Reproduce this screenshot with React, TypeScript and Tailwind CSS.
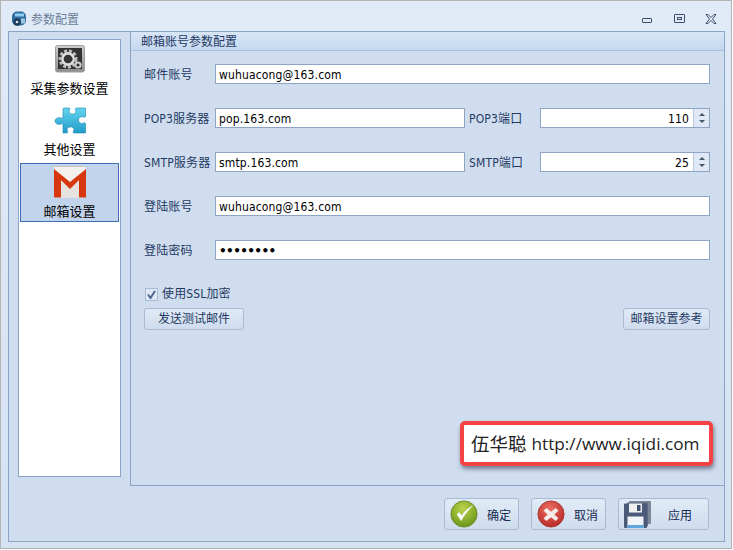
const FONT = "font-['DejaVu_Sans_Condensed','DejaVu_Sans','Noto_Sans_CJK_SC',sans-serif]";
const CJK = "font-['Noto_Sans_CJK_SC',sans-serif]";

function Gear() {
  return (
    <svg width="30" height="28" viewBox="0 0 30 28">
      <defs>
        <linearGradient id="gf" x1="0" y1="0" x2="0" y2="1"><stop offset="0" stopColor="#cfcfcf" /><stop offset="1" stopColor="#8d8d8d" /></linearGradient>
      </defs>
      <rect x="0.5" y="0.5" width="29" height="26.5" rx="2" fill="url(#gf)" stroke="#a0a0a0" />
      <rect x="3" y="3" width="24" height="21" fill="#333" />
      <circle cx="13" cy="14" r="8" fill="none" stroke="#bdbdbd" strokeWidth="3" strokeDasharray="3 1.800" />
      <circle cx="13" cy="14" r="5.600" fill="none" stroke="#dcdcdc" strokeWidth="2.600" />
      <circle cx="15" cy="14" r="2.500" fill="#333" />
      <circle cx="23" cy="20" r="2.600" fill="#333" stroke="#d0d0d0" strokeWidth="2" />
    </svg>
  );
}

function Puzzle() {
  return (
    <svg width="32" height="27" viewBox="0 0 32 27">
      <defs>
        <linearGradient id="pz" x1="0" y1="0" x2="0" y2="1"><stop offset="0" stopColor="#66d4f0" /><stop offset="1" stopColor="#1f9dcb" /></linearGradient>
      </defs>
      <path d="M10 1h5c1 0 1 1 .5 2-1 2 0 4 3 4s4-2 3-4c-.5-1 0-2 1-2h9v8c0 1-1 1.500-2 1-2-1-5 0-5 3s3 4 5 3c1-.5 2 0 2 1v9H20c-1 0-1-1-.5-2 1-2 0-4-3-4s-4 2-3 4c.5 1 0 2-1 2H9v-8c0-1-1-1.500-2-1-2 1-6 0-6-3s4-4 6-3c1 .5 2 0 2-1V2c0-.6.500-1 1-1z" fill="url(#pz)" stroke="#1b86ad" strokeWidth="0.6" />
    </svg>
  );
}

function Gmail() {
  return (
    <svg width="32" height="32" viewBox="0 0 32 32">
      <rect x="0" y="0" width="32" height="31.500" fill="#f3f1ee" />
      <rect x="0" y="0" width="32" height="1" fill="#c9c5bf" />
      <path d="M7 14 16 23 25 14V31.500H7z" fill="#e6e3de" />
      <path d="M0 3 16 16 32 3V31.500H25V14L16 23 7 14V31.500H0z" fill="#d7370f" />
    </svg>
  );
}

function Check() {
  return (
    <svg width="28" height="28" viewBox="0 0 30 30">
      <defs>
        <radialGradient id="ck" cx="0.45" cy="0.3" r="0.8"><stop offset="0" stopColor="#bcd34c" /><stop offset="1" stopColor="#5f8f14" /></radialGradient>
      </defs>
      <circle cx="15" cy="15" r="14" fill="url(#ck)" stroke="#6d8a22" />
      <path d="M7.500 15.500 12 22c4-7 7-11 12-15.500C18.500 9 15 13 12.500 17L10 13.500z" fill="#fff" stroke="#e9efe0" strokeWidth="0.8" />
    </svg>
  );
}

function Cross() {
  return (
    <svg width="28" height="28" viewBox="0 0 30 30">
      <defs>
        <radialGradient id="cr" cx="0.45" cy="0.3" r="0.8"><stop offset="0" stopColor="#ee6f66" /><stop offset="1" stopColor="#b0211c" /></radialGradient>
      </defs>
      <circle cx="15" cy="15" r="14" fill="url(#cr)" stroke="#a83a32" />
      <path d="M10 8.500l5 4 5-4 3 3-4.500 4 4.500 4-3 3-5-4-5 4-3-3 4.500-4L7 11.500z" fill="#f4ece8" />
    </svg>
  );
}

function Save() {
  return (
    <svg width="27" height="27" viewBox="0 0 27 27">
      <rect x="5" y="0" width="22" height="23" rx="1" fill="#7b8799" />
      <rect x="3" y="1.500" width="21" height="24" rx="1" fill="#5c6a82" />
      <path d="M0 3.500a1 1 0 0 1 1-1h20l2 2V26a1 1 0 0 1-1 1H1a1 1 0 0 1-1-1z" fill="#4b5a78" />
      <rect x="5" y="2.500" width="13" height="9" fill="#eef0f3" />
      <rect x="13" y="4" width="3.500" height="6" fill="#3e4f6d" />
      <rect x="3.500" y="15.500" width="16" height="11.500" fill="#f0f3f7" />
      <rect x="3.500" y="24" width="16" height="3" fill="#5ea5dd" />
    </svg>
  );
}

function Nav({ icon, label, active, h }: { icon: React.ReactNode; label: string; active?: boolean; h: string }) {
  return (
    <div className={`${h} flex flex-col items-center ${active ? "bg-[#c2d3ec] border border-[#3c6db5]" : ""}`}>
      {icon}
      <span className={`${CJK} text-[13px] leading-[16px] text-black`}>{label}</span>
    </div>
  );
}

function Field({ value, w, right, spin, dots }: { value: string; w: string; right?: boolean; spin?: boolean; dots?: boolean }) {
  return (
    <div className={`${w} h-[20px] flex bg-white border border-[#8ea4c4]`}>
      <div className={`flex-1 px-[3px] text-[12px] leading-[20px] text-black whitespace-nowrap ${right ? "text-right pr-[4px]" : ""} ${dots ? "font-bold font-['DejaVu_Sans',sans-serif] tracking-[-0.6px]" : "tracking-[0.15px]"}`}>{value}</div>
      {spin && (
        <div className="w-[16px] border-l border-[#b9c8dc] bg-[#dfe8f4] flex flex-col items-center justify-center gap-[4px]">
          <div className="w-0 h-0 border-x-[3px] border-x-transparent border-b-[3px] border-b-[#44546c]" />
          <div className="w-0 h-0 border-x-[3px] border-x-transparent border-t-[3px] border-t-[#44546c]" />
        </div>
      )}
    </div>
  );
}

function Row({ children, mt }: { children: React.ReactNode; mt?: string }) {
  return <div className={`flex items-center h-[20px] ${mt ?? ""}`}>{children}</div>;
}

function Label({ text, w = "w-[71px]" }: { text: string; w?: string }) {
  return <div className={`${w} shrink-0 text-[12px] leading-[20px] tracking-[0.15px] text-[#1f3a64] whitespace-nowrap pt-px`}>{text}</div>;
}

function Btn({ icon, label, w, iconGap }: { icon: React.ReactNode; label: string; w: string; iconGap: string }) {
  return (
    <div className={`${w} h-[32px] flex items-center pl-[5px] rounded-[3px] border border-[#a9bad2] bg-gradient-to-b from-[#e1ebf7] to-[#cfdcee]`}>
      {icon}
      <span className={`${iconGap} mt-[2px] text-[12px] text-[#15294f] ${CJK}`}>{label}</span>
    </div>
  );
}

function SmallBtn({ label, w }: { label: string; w: string }) {
  return (
    <div className={`${w} h-[22px] flex items-center justify-center rounded-[3px] border border-[#a9bad2] bg-gradient-to-b from-[#e1ebf7] to-[#cfdcee] text-[12px] text-[#1f3a64]`}>
      {label}
    </div>
  );
}

export default function App() {
  return (
    <div className={`${FONT} relative w-[733px] h-[550px] overflow-hidden bg-white`}>
      <div className="w-[732px] h-[549px] border border-[#b4b4b4] bg-gradient-to-b from-[#e0ebf7] to-[#d5e2f2] flex flex-col">
        {/* title bar */}
        <div className="h-[30px] shrink-0 flex items-center pl-[10px] pt-[5px]">
          <svg width="16" height="16" viewBox="0 0 16 16">
            <rect x="1" y="0.500" width="14" height="14" rx="5" fill="#2f6f9f" />
            <rect x="4" y="2.500" width="9" height="3" fill="#8fd0ef" />
            <circle cx="6" cy="11" r="3.700" fill="#1d3b5a" />
            <circle cx="6" cy="11" r="1.300" fill="#dbe7f2" />
            <rect x="10" y="7.500" width="4" height="5" fill="#9fc6e2" />
          </svg>
          <span className={`${CJK} ml-[4px] text-[12px] text-[#6d7f99]`}>参数配置</span>
          <div className="flex-1" />
          <div className="w-[10px] h-[5px] mr-[22px] mt-[3px] rounded-[1px] border border-[#3e4f6d]" />
          <div className="w-[11px] h-[9px] mr-[20px] border border-[#3e4f6d] rounded-[1px] flex items-center justify-center">
            <div className="w-[5px] h-[3px] border border-[#3e4f6d]" />
          </div>
          <svg width="12" height="10" viewBox="0 0 12 10" className="mr-[14px]" fill="none" stroke="#3e4f6d" strokeWidth="1">
            <path d="M1 .5h2L6 3.500 9 .5h2L7.500 5 11 9.500H9L6 6.500 3 9.500H1L4.500 5z" />
          </svg>
        </div>
        {/* main frame */}
        <div className="ml-[7px] mr-[6px] h-[511px] shrink-0 border border-[#8ba3c4] bg-[#d0ddee] flex flex-col">
          <div className="h-[454px] shrink-0 flex">
            <div className="w-[121px] shrink-0 pl-[9px] pt-[7px]">
              <div className="w-[103px] h-[438px] bg-white border border-[#8ba3c4] p-px flex flex-col">
                <Nav h="h-[62px]" icon={<div className="mt-[4px] h-[35px]"><Gear /></div>} label="采集参数设置" />
                <Nav h="h-[60px]" icon={<div className="mt-[4px] h-[34px]"><Puzzle /></div>} label="其他设置" />
                <Nav h="h-[59px]" active icon={<div className="mt-[2px] h-[37px]"><Gmail /></div>} label="邮箱设置" />
              </div>
            </div>
            <div className="flex-1 border-l border-b border-[#8ba3c4]">
              <div className="h-[19px] border-b border-[#a9c0dc] bg-gradient-to-b from-[#d8e5f5] to-[#c6d9f1] pl-[10px] text-[12px] leading-[21px] text-[#1f3a64]">
                邮箱账号参数配置
              </div>
              <div className="pl-[13px] pr-[14px] pt-[13px]">
                <Row><Label text="邮件账号" /><Field w="flex-1" value="wuhuacong@163.com" /></Row>
                <Row mt="mt-[24px]">
                  <Label text="POP3服务器" /><Field w="w-[250px]" value="pop.163.com" />
                  <div className="w-[4px]" /><Label text="POP3端口" /><Field w="flex-1" right spin value="110" />
                </Row>
                <Row mt="mt-[24px]">
                  <Label text="SMTP服务器" /><Field w="w-[250px]" value="smtp.163.com" />
                  <div className="w-[4px]" /><Label text="SMTP端口" /><Field w="flex-1" right spin value="25" />
                </Row>
                <Row mt="mt-[24px]"><Label text="登陆账号" /><Field w="flex-1" value="wuhuacong@163.com" /></Row>
                <Row mt="mt-[24px]"><Label text="登陆密码" /><Field w="flex-1" dots value="••••••••" /></Row>
                <div className="mt-[27px] h-[14px] flex items-center">
                  <div className="ml-px w-[13px] h-[13px] border border-[#a9bad2] bg-[#dfe8f4] flex items-center justify-center">
                    <svg width="9" height="9" viewBox="0 0 9 9"><path d="M1 4.500 3.500 8 8 1" fill="none" stroke="#4d6690" strokeWidth="2" /></svg>
                  </div>
                  <span className="ml-[4px] text-[12px] text-[#1f3a64] tracking-[0.15px]">使用SSL加密</span>
                </div>
                <div className="mt-[7px] flex justify-between">
                  <SmallBtn label="发送测试邮件" w="w-[100px]" />
                  <SmallBtn label="邮箱设置参考" w="w-[87px]" />
                </div>
              </div>
            </div>
          </div>
          {/* button bar */}
          <div className="flex justify-end gap-[12px] pr-[15px] pt-[12px]">
            <Btn w="w-[75px]" iconGap="ml-[9px]" icon={<Check />} label="确定" />
            <Btn w="w-[75px]" iconGap="ml-[9px]" icon={<Cross />} label="取消" />
            <Btn w="w-[91px]" iconGap="ml-[17px]" icon={<Save />} label="应用" />
          </div>
        </div>
      </div>
      {/* annotation */}
      <div className="absolute left-[460px] top-[421px] w-[253px] h-[45px] rounded-[5px] border-[4px] border-[#f44245] bg-white shadow-[1px_3px_4px_rgba(40,50,70,0.55)] flex items-center pl-[7px]">
        <span className={`${CJK} text-[18.500px] text-[#222]`}>伍华聪</span>
        <span className="ml-[5px] font-['Open_Sans',sans-serif] text-[17.200px] text-[#222]">http://www.iqidi.com</span>
      </div>
    </div>
  );
}
